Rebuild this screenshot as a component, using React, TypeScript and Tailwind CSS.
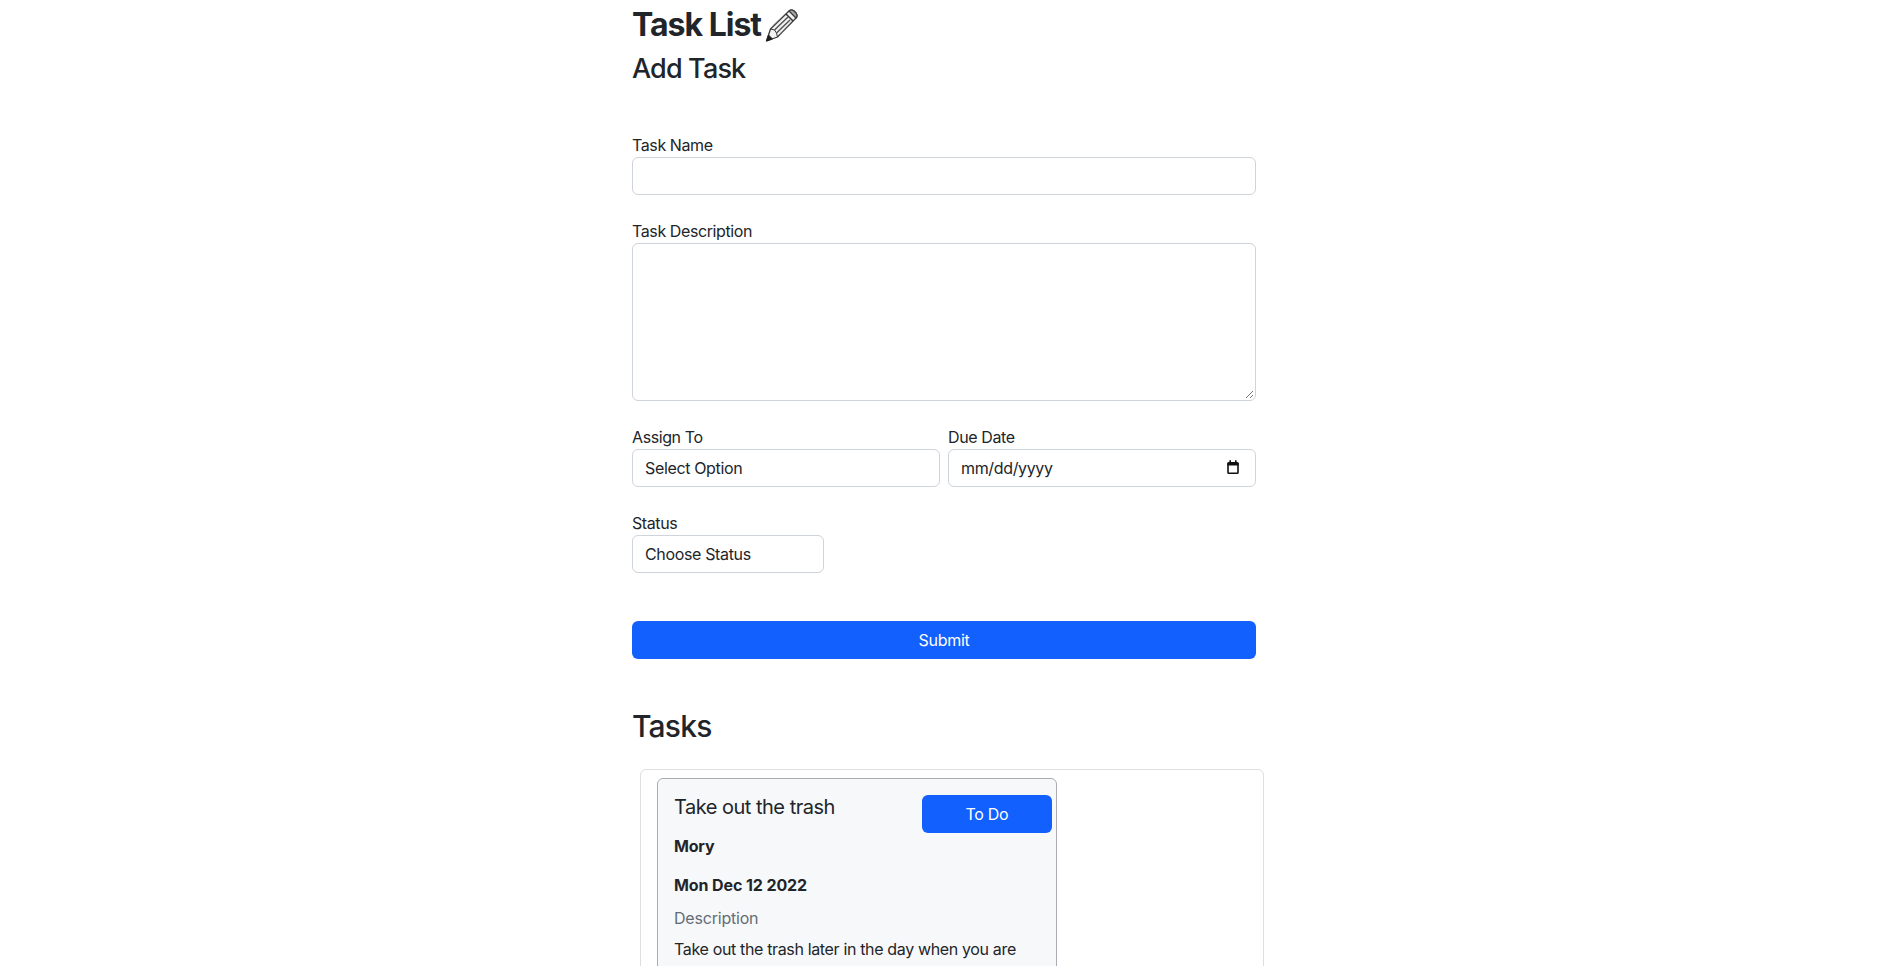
import React from "react";

function Pencil() {
  return (
    <svg width="33" height="34" viewBox="0 0 33 34" className="ml-[4px] mt-[-1px] shrink-0" fill="none" stroke="#3a3a3a" strokeLinejoin="round">
      <path d="M1.5 33 L5.5 21 L24 3 Q26.5 1 29 3 L31 5 Q33 8 31 10 L12.5 29 Z" fill="#f2f2f2" strokeWidth="1.3" />
      <path d="M1.5 33 L3.5 27 L7.5 31 Z" fill="#1f1f1f" stroke="#1f1f1f" strokeWidth="1" />
      <path d="M5.5 21 L9.5 22 L11.5 25 L12.5 29" strokeWidth="1" />
      <path d="M9.5 22 L23 9 M11.5 25 L25 12" strokeWidth="1.5" stroke="#555" />
      <path d="M7.5 18 L21 5 M14.5 27 L28 14" strokeWidth="0.8" stroke="#888" />
      <path d="M21 6 L28 13" strokeWidth="1.6" />
      <path d="M24 3 L31 10 Q33 8 31 5 L29 3 Q26.5 1 24 3 Z" fill="#a8a8a8" strokeWidth="1.2" />
    </svg>
  );
}

export default function App() {
  const label = "block text-[16px] leading-[24px] tracking-[-0.4px] text-[#212529]";
  const field = "h-[38px] rounded-[6px] border border-[#ced4da] bg-white px-[12px] text-[16px] leading-[24px] tracking-[-0.35px] text-[#212529] flex items-center justify-between";
  return (
    <div className="h-[966px] overflow-hidden bg-white text-[#212529] [font-family:Inter,'Liberation_Sans',sans-serif]">
      <div className="ml-[632px] w-[624px]">
        <h1 className="flex h-[50px] items-center text-[32px] leading-[38px] font-bold tracking-[-1px]">
          Task List
          <Pencil />
        </h1>
        <h2 className="h-[38px] text-[27px] leading-[38px] font-medium tracking-[-0.85px]">Add Task</h2>

        <form className="mt-[45px] flex flex-col">
          <label className={label}>Task Name</label>
          <div className={field + " w-full"} />

          <label className={label + " mt-[24px]"}>Task Description</label>
          <div className="relative h-[158px] w-full rounded-[6px] border border-[#ced4da] bg-white">
            <svg width="9" height="9" viewBox="0 0 9 9" className="absolute right-[1px] bottom-[1px]" stroke="#777" strokeWidth="1">
              <path d="M1 8 L8 1 M5 8 L8 5" />
            </svg>
          </div>

          <div className="mt-[24px] grid grid-cols-[308px_308px] gap-x-[8px]">
            <div>
              <label className={label}>Assign To</label>
              <div className={field + " w-full"}>Select Option</div>
            </div>
            <div>
              <label className={label}>Due Date</label>
              <div className={field + " w-full"}>
                <span>mm/dd/yyyy</span>
                <svg width="16" height="16" viewBox="0 0 16 16" className="mr-[2px]" fill="none" stroke="#111" strokeWidth="1.6">
                  <rect x="3" y="2.8" width="10" height="10.4" rx="0.8" />
                  <path d="M2.4 4.2 H13.6" strokeWidth="2.6" />
                  <path d="M5.2 0.2 V2.5 M10.8 0.2 V2.5" strokeWidth="1.6" />
                </svg>
              </div>
            </div>
          </div>

          <label className={label + " mt-[24px]"}>Status</label>
          <div className={field + " w-[192px]"}>Choose Status</div>

          <button type="button" className="mt-[48px] h-[38px] w-full rounded-[6px] bg-[#1260fe] text-center text-[16px] leading-[24px] tracking-[-0.3px] text-white">
            Submit
          </button>
        </form>

        <h2 className="mt-[48px] h-[38px] text-[30px] leading-[38px] font-medium tracking-[-0.8px]">Tasks</h2>

        <div className="mt-[24px] ml-[8px] h-[400px] w-[624px] rounded-[6px] border border-[#dfdfdf] pt-[8px] pl-[16px]">
          <div className="h-[400px] w-[400px] rounded-[6px] border border-[#a9adb1] bg-[#f7f8fa] px-[16px] pt-[16px]">
            <div className="flex items-start justify-between">
              <div className="text-[20px] leading-[24px] tracking-[-0.5px]">Take out the trash</div>
              <button type="button" className="mr-[-12px] h-[38px] w-[130px] rounded-[6px] bg-[#1260fe] text-[16px] leading-[24px] tracking-[-0.3px] text-white">
                To Do
              </button>
            </div>
            <div className="mt-[1px] text-[16px] leading-[24px] font-bold tracking-[-0.2px]">Mory</div>
            <div className="mt-[15px] text-[16px] leading-[24px] font-bold tracking-[-0.1px]">Mon Dec 12 2022</div>
            <div className="mt-[9px] text-[16px] leading-[24px] tracking-[-0.2px] text-[#646d75]">Description</div>
            <div className="mt-[7px] text-[16px] leading-[24px] tracking-[-0.35px]">
              Take out the trash later in the day when you are
            </div>
          </div>
        </div>
      </div>
    </div>
  );
}
